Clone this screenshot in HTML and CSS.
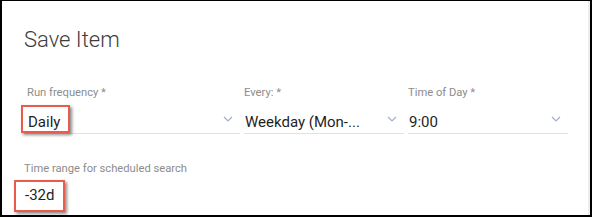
FILE: index.html
```html
<!DOCTYPE html>
<html lang="en">
<head>
    <meta charset="UTF-8">
    <title>Save Item</title>
    <link rel="stylesheet" href="styles.css">
</head>
<body>
    <div class="dialog">
        <h2 class="title">Save Item</h2>
        <div class="row">
            <div class="field field-first">
                <label class="label">Run frequency *</label>
                <div class="select">
                    <span class="value mark mark-freq">Daily</span>
                    <svg class="chevron" width="10" height="6" viewBox="0 0 10 6"><path d="M1 1l4 4 4-4"/></svg>
                </div>
            </div>
            <div class="field">
                <label class="label">Every: *</label>
                <div class="select">
                    <span class="value">Weekday (Mon-...</span>
                    <svg class="chevron" width="10" height="6" viewBox="0 0 10 6"><path d="M1 1l4 4 4-4"/></svg>
                </div>
            </div>
            <div class="field">
                <label class="label">Time of Day *</label>
                <div class="select">
                    <span class="value">9:00</span>
                    <svg class="chevron" width="10" height="6" viewBox="0 0 10 6"><path d="M1 1l4 4 4-4"/></svg>
                </div>
            </div>
        </div>
        <div class="field field-range">
            <label class="label">Time range for scheduled search</label>
            <div class="text-input">
                <span class="value mark mark-range">-32d</span>
            </div>
        </div>
    </div>
</body>
</html>
```

FILE: styles.css
```css
:root {
    --title-color: #3d3d3d;
    --label-color: #8c8c8c;
    --value-color: #1f1f1f;
    --line-color: #e2e2e2;
    --chevron-color: #a3b1c6;
    --mark-color: #ea5b4c;
}
* {
    margin: 0;
    padding: 0;
    box-sizing: border-box;
}
body {
    font-family: Roboto, 'Liberation Sans', Arial, sans-serif;
    background: #fff;
}
.dialog {
    width: 592px;
    height: 217px;
    border-style: solid;
    border-color: #000;
    border-width: 1px 2px 2px 2px;
    box-shadow: inset -2px 0 0 #ededed;
    padding: 0 22px;
    overflow: hidden;
}
.title {
    margin-top: 25px;
    font-size: 22px;
    line-height: 28px;
    font-weight: 300;
    color: var(--title-color);
}
.row {
    display: grid;
    grid-template-columns: 216px 1fr 1fr;
    column-gap: 4px;
    margin-top: 32px;
}
.label {
    display: block;
    font-size: 11.2px;
    line-height: 14px;
    color: var(--label-color);
}
.field-first .label,
.field-first .value {
    margin-left: 3px;
}
.select {
    display: flex;
    justify-content: space-between;
    align-items: flex-start;
    padding: 12px 0 1px 1px;
    border-bottom: 1px solid var(--line-color);
}
.value {
    font-size: 15px;
    line-height: 20px;
    color: var(--value-color);
    white-space: nowrap;
}
.chevron {
    margin-top: 4px;
    margin-right: 7px;
    fill: none;
    stroke: var(--chevron-color);
    stroke-width: 1.2;
}
.field-range {
    margin-top: 28px;
}
.text-input {
    padding: 9px 0 0 1px;
}
.mark {
    position: relative;
    display: inline-block;
}
.mark::after {
    content: "";
    position: absolute;
    border: 2px solid var(--mark-color);
    box-shadow: 2px 2px 3px rgba(0, 0, 0, 0.45);
}
.mark-freq::after {
    top: -7px;
    bottom: -1px;
    left: -7px;
    right: -10px;
}
.mark-range::after {
    top: -5px;
    bottom: -7px;
    left: -11px;
    right: -11px;
}
```
